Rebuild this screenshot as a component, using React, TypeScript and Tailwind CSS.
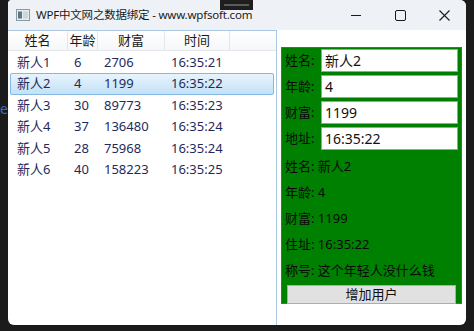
import React from "react";

const rows = [
  ["新人1", "6", "2706", "16:35:21"],
  ["新人2", "4", "1199", "16:35:22"],
  ["新人3", "30", "89773", "16:35:23"],
  ["新人4", "37", "136480", "16:35:24"],
  ["新人5", "28", "75968", "16:35:24"],
  ["新人6", "40", "158223", "16:35:25"],
];

const font = { fontFamily: '"Noto Sans", "Noto Sans CJK SC", sans-serif' };

export default function App() {
  return (
    <div className="relative w-[474px] h-[331px] bg-[#1b1b1b] overflow-hidden" style={font}>
      <div className="absolute left-0 top-[98px] text-[14px] text-[#2d6fd6]">e</div>
      <div className="absolute left-[8px] top-0 w-[458px] h-[325px] bg-white rounded-[6px] rounded-tl-[4px] overflow-hidden flex flex-col">
        {/* title bar */}
        <div className="h-[30px] bg-[#eef2f7] flex items-center shrink-0">
          <svg width="14" height="12" viewBox="0 0 14 12" className="ml-[8px]">
            <rect x="0.5" y="0.5" width="13" height="11" fill="#e6ecef" stroke="#8a9aa3" />
            <rect x="2" y="2.5" width="4" height="7" fill="#5f7783" />
            <rect x="7" y="2.5" width="5" height="7" fill="#c9d6dc" />
          </svg>
          <span className="ml-[6px] text-[11.5px] tracking-[-0.2px] text-[#1a1a1a] leading-none" style={{ fontFamily: '"Noto Sans", "Noto Sans CJK SC", sans-serif' }}>
            WPF中文网之数据绑定 - www.wpfsoft.com
          </span>
          <div className="ml-auto flex items-center h-full">
            <div className="w-[44px] h-full flex items-center justify-center">
              <svg width="10" height="10" viewBox="0 0 10 10"><path d="M0 5.5h10" stroke="#1a1a1a" strokeWidth="1" /></svg>
            </div>
            <div className="w-[44px] h-full flex items-center justify-center">
              <svg width="11" height="11" viewBox="0 0 11 11"><rect x="0.5" y="0.5" width="10" height="10" rx="1.5" fill="none" stroke="#1a1a1a" strokeWidth="1" /></svg>
            </div>
            <div className="w-[44px] h-full flex items-center justify-center">
              <svg width="11" height="11" viewBox="0 0 11 11"><path d="M0.5 0.5l10 10M10.5 0.5l-10 10" stroke="#1a1a1a" strokeWidth="1.1" /></svg>
            </div>
          </div>
        </div>
        {/* body */}
        <div className="flex flex-1">
          {/* list view */}
          <div className="w-[269px] border-t border-r border-[#aac7e3] flex flex-col text-[13px]">
            <div className="h-[20px] flex border-b border-[#e3e6ea] bg-gradient-to-b from-white to-[#f6f7f9] text-[#1a1a1a]">
              <div className="w-[60px] flex items-center justify-center border-r border-[#e3e6ea]">姓名</div>
              <div className="w-[30px] flex items-center justify-center border-r border-[#e3e6ea]">年龄</div>
              <div className="w-[67px] flex items-center justify-center border-r border-[#e3e6ea]">财富</div>
              <div className="w-[65px] flex items-center justify-center border-r border-[#e3e6ea]">时间</div>
              <div className="flex-1" />
            </div>
            <div className="pt-[1px] px-[2px]">
              {rows.map((r, i) => (
                <div
                  key={i}
                  className={
                    "h-[21.4px] flex items-center text-[#1f2a5c] rounded-[2px] " +
                    (i === 1 ? "border border-[#84b9e6] bg-gradient-to-b from-[#e8f4fd] to-[#c3e1f7]" : "border border-transparent")
                  }
                >
                  <div className="w-[58px] pl-[6px]">{r[0]}</div>
                  <div className="w-[30px] pl-[5px]">{r[1]}</div>
                  <div className="w-[67px] pl-[5px]">{r[2]}</div>
                  <div className="w-[65px] pl-[5px]">{r[3]}</div>
                </div>
              ))}
            </div>
          </div>
          {/* right panel */}
          <div className="flex-1 pl-[4px] pr-[4px] pt-[17px]">
            <div className="w-[181px] h-[257px] bg-[#008000] border border-[#1f8f1f] text-[13px] text-[#0a0a0a] flex flex-col px-[3px] pt-[1px]">
              {[
                ["姓名:", "新人2"],
                ["年龄:", "4"],
                ["财富:", "1199"],
                ["地址:", "16:35:22"],
              ].map(([l, v], i) => (
                <div key={i} className="flex items-center h-[23px] mb-[3px]">
                  <span className="w-[36px]">{l}</span>
                  <div className="flex-1 h-[23px] bg-white border border-[#9aa59a] flex items-center pl-[3px] text-[14px] text-[#111]">{v}</div>
                </div>
              ))}
              <div className="flex flex-col mt-[1px]">
                {["姓名: 新人2", "年龄: 4", "财富: 1199", "住址: 16:35:22", "称号: 这个年轻人没什么钱"].map((t, i) => (
                  <div key={i} className="h-[26px] flex items-center">{t}</div>
                ))}
              </div>
              <div className="mt-[1px] mx-[2px] h-[19px] bg-[#e1e1e1] border border-[#adadad] flex items-center justify-center text-[13px] text-[#111]">增加用户</div>
            </div>
          </div>
        </div>
      </div>
      <div className="absolute left-[220px] top-0 w-[33px] h-[10px] bg-[#1e1e1e]">
        <div className="mx-[4px] mt-[4px] h-[2px] bg-[#5a5a5a]" />
      </div>
    </div>
  );
}
